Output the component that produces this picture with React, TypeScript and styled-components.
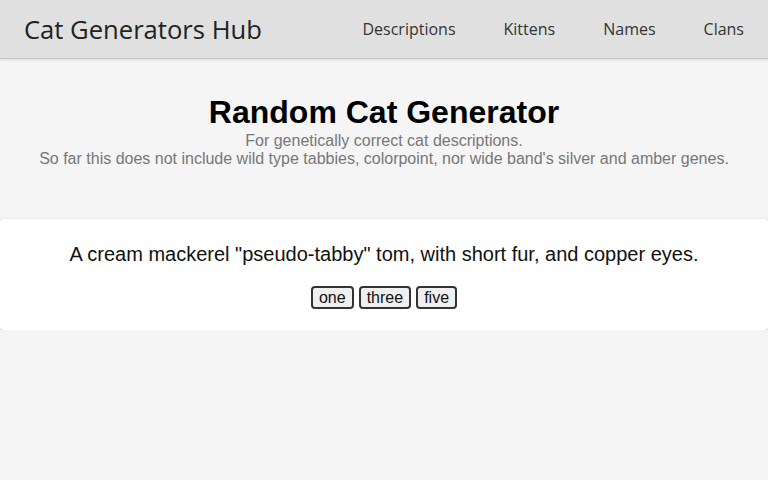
import styled, { createGlobalStyle } from "styled-components";

const GlobalStyle = createGlobalStyle`
  html, body {
    margin: 0;
    padding: 0;
    background: #f5f5f5;
    font-family: "Liberation Sans", Arial, sans-serif;
  }
`;

const navItems = ["Descriptions", "Kittens", "Names", "Clans"];
const buttons = ["one", "three", "five"];

const App = () => {
    return (
        <>
            <GlobalStyle />
            <Header>
                <Brand>Cat Generators Hub</Brand>
                <Nav>
                    {navItems.map((item) => (
                        <NavLink key={item} href="#">
                            {item}
                        </NavLink>
                    ))}
                </Nav>
            </Header>

            <Intro>
                <h1>Random Cat Generator</h1>
                <p>For genetically correct cat descriptions.</p>
                <p>
                    So far this does not include wild type tabbies, colorpoint, nor wide
                    band's silver and amber genes.
                </p>
            </Intro>

            <Card>
                <Description>
                    A cream mackerel "pseudo-tabby" tom, with short fur, and copper eyes.
                </Description>
                <ButtonRow>
                    {buttons.map((b) => (
                        <GenButton key={b}>{b}</GenButton>
                    ))}
                </ButtonRow>
            </Card>
        </>
    );
};

export default App;

const Header = styled.header`
  display: flex;
  align-items: center;
  justify-content: space-between;
  height: 59px;
  background-color: #e0e0e0;
  border-bottom: 1px solid #c6c6c6;
  box-shadow: 0 1px 3px rgba(0, 0, 0, 0.1);
  padding-left: 24px;
  box-sizing: border-box;
`;

const Brand = styled.div`
  font-family: "Open Sans", sans-serif;
  font-size: 25.6px;
  color: #222;
`;

const Nav = styled.nav`
  display: flex;
  align-items: center;
`;

const NavLink = styled.a`
  font-family: "Open Sans", sans-serif;
  font-size: 16px;
  color: #333;
  text-decoration: none;
  padding: 0 24px;
`;

const Intro = styled.section`
  text-align: center;
  padding: 34px 0 51px;

  h1 {
    font-size: 32px;
    font-weight: bold;
    color: #000;
    margin: 0 0 1px;
    line-height: 38px;
  }

  p {
    font-size: 16px;
    color: #777;
    margin: 0;
    line-height: 18px;
  }
`;

const Card = styled.div`
  background: #fff;
  border-radius: 4px;
  box-shadow: 0 1px 3px rgba(0, 0, 0, 0.25);
  padding: 23px 0 21px;
  text-align: center;
`;

const Description = styled.p`
  font-size: 20px;
  color: #111;
  margin: 0 0 20px;
  line-height: 24px;
`;

const ButtonRow = styled.div`
  display: flex;
  justify-content: center;
  gap: 5px;
`;

const GenButton = styled.button`
  font-family: "Liberation Sans", Arial, sans-serif;
  font-size: 16px;
  color: #111;
  background: #efefef;
  border: 2px solid #333;
  border-radius: 4px;
  padding: 0 6px;
  height: 23px;
  line-height: 19px;
`;
